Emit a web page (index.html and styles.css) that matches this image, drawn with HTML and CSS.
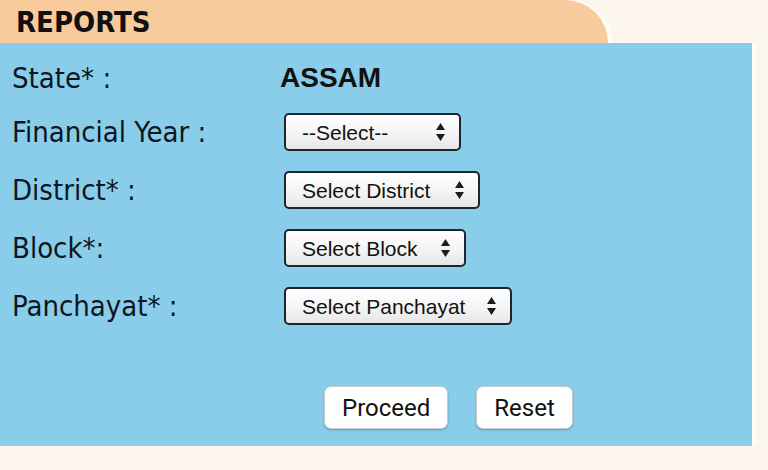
FILE: index.html
```html
<!DOCTYPE html>
<html lang="en">
<head>
  <meta charset="UTF-8" />
  <meta name="viewport" content="width=device-width, initial-scale=1.0"/>
  <title>Reports</title>
  <link rel="stylesheet" href="styles.css">
</head>
<body>
  <!-- header tab -->
  <div class="tab">
    <h2>REPORTS</h2>
  </div>

  <!-- report filter panel -->
  <div class="panel">
    <div class="rows">
      <div class="row row-state">
        <span class="label">State* :</span>
        <span class="state-name">ASSAM</span>
      </div>
      <div class="row">
        <span class="label">Financial Year :</span>
        <span class="select-wrap w-year">
          <select><option>--Select--</option></select>
          <svg class="arrows" width="9" height="18" viewBox="0 0 9 18"><path d="M4.5 0 L9 7 L0 7 Z M0 11 L9 11 L4.5 18 Z" fill="#1c1c1c"/></svg>
        </span>
      </div>
      <div class="row">
        <span class="label">District* :</span>
        <span class="select-wrap w-district">
          <select><option>Select District</option></select>
          <svg class="arrows" width="9" height="18" viewBox="0 0 9 18"><path d="M4.5 0 L9 7 L0 7 Z M0 11 L9 11 L4.5 18 Z" fill="#1c1c1c"/></svg>
        </span>
      </div>
      <div class="row">
        <span class="label">Block*:</span>
        <span class="select-wrap w-block">
          <select><option>Select Block</option></select>
          <svg class="arrows" width="9" height="18" viewBox="0 0 9 18"><path d="M4.5 0 L9 7 L0 7 Z M0 11 L9 11 L4.5 18 Z" fill="#1c1c1c"/></svg>
        </span>
      </div>
      <div class="row">
        <span class="label">Panchayat* :</span>
        <span class="select-wrap w-panchayat">
          <select><option>Select Panchayat</option></select>
          <svg class="arrows" width="9" height="18" viewBox="0 0 9 18"><path d="M4.5 0 L9 7 L0 7 Z M0 11 L9 11 L4.5 18 Z" fill="#1c1c1c"/></svg>
        </span>
      </div>
    </div>

    <div class="actions">
      <button type="button">Proceed</button>
      <button type="button">Reset</button>
    </div>
  </div>
</body>
</html>
```

FILE: styles.css
```css
html, body {
  margin: 0; padding: 0;
  height: 100%;
}
body {
  background-color: #fcf6ef;
  font-family: "DejaVu Sans Condensed", "DejaVu Sans", sans-serif;
  color: #0d1620;
}

/* orange title tab */
.tab {
  width: 608px;
  height: 43px;
  background-color: #f8cb9c;
  border-top-right-radius: 52px;
  box-shadow: 4px 0 0 #fffdfa;
}
.tab h2 {
  margin: 0;
  padding: 7px 0 0 16px;
  font-size: 29px;
  font-weight: bold;
  line-height: 30px;
  color: #111;
}

/* blue form panel */
.panel {
  width: 752px;
  height: 403px;
  box-sizing: border-box;
  padding: 20px 0 0 12px;
  background-color: #89cdea;
  box-shadow: 4px 0 0 #fffdfa;
}
.rows {
  display: flex;
  flex-direction: column;
  gap: 20px;
}
.row {
  display: flex;
  align-items: center;
  height: 38px;
}
.row-state {
  height: 30px;
}
.label {
  width: 272px;
  font-size: 29px;
  white-space: pre;
}
.state-name {
  font-family: "Liberation Sans", Arial, sans-serif;
  font-weight: bold;
  font-size: 28px;
  color: #111;
  margin-left: -4px;
}

/* select boxes */
.select-wrap {
  position: relative;
  display: inline-block;
  height: 38px;
}
.select-wrap select {
  -webkit-appearance: none;
  appearance: none;
  width: 100%;
  height: 38px;
  box-sizing: border-box;
  padding: 0 0 0 16px;
  border: 2px solid #1d2630;
  border-radius: 5px;
  background: linear-gradient(#ffffff, #f4f4f4 55%, #e6e6e6);
  font-family: "Liberation Sans", Arial, sans-serif;
  font-size: 21px;
  color: #111;
}
.select-wrap .arrows {
  position: absolute;
  right: 16px;
  top: 10px;
  pointer-events: none;
}
.w-year { width: 177px; }
.w-district { width: 196px; }
.w-block { width: 182px; }
.w-panchayat { width: 228px; }

/* buttons */
.actions {
  display: flex;
  gap: 28px;
  margin: 61px 0 0 312px;
}
.actions button {
  height: 43px;
  padding: 0 17px;
  background-color: #fff;
  border: 1px solid #c4ccd2;
  border-radius: 7px;
  box-shadow: 0 1px 2px rgba(0,0,0,0.25);
  font-family: Roboto, "Liberation Sans", sans-serif;
  font-size: 24px;
  color: #111;
}
```
